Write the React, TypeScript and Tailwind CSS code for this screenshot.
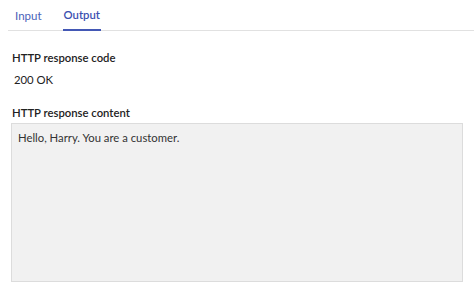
export default function App() {
  return (
    <div className="w-[474px] h-[297px] bg-white overflow-hidden text-[#222]" style={{ fontFamily: 'Lato, "Noto Sans", sans-serif' }}>
      <div className="ml-[8px] flex h-[31px] border-b border-[#e1e1e1]">
        <div className="ml-[7px] pt-[7px] text-[11.5px] text-[#4a62b8]">Input</div>
        <div className="ml-[21px] pt-[7px] text-[11.3px] font-semibold text-[#3b50b0] border-b-2 border-[#4358b5] h-[31px] px-[1px]">Output</div>
      </div>
      <div className="px-[11px]">
        <div className="mt-[18px] ml-[1px] text-[11.3px] font-semibold leading-[18px]">HTTP response code</div>
        <div className="mt-[4px] ml-[3px] text-[11.3px] leading-[18px]">200 OK</div>
        <div className="mt-[15px] ml-[1px] text-[11.3px] font-semibold leading-[18px]">HTTP response content</div>
        <div className="mt-[1px] w-[452px] h-[159px] bg-[#f1f1f1] border border-[#dcdcdc] px-[6px] py-[5px] text-[11.3px] leading-[18px] text-[#333]">Hello, Harry. You are a customer.</div>
      </div>
    </div>
  );
}
